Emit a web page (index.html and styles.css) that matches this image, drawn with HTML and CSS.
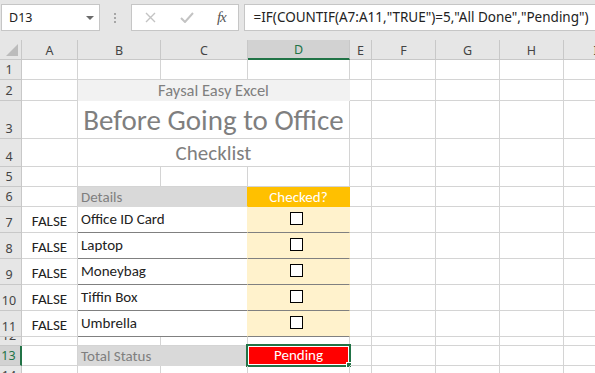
FILE: index.html
```html
<!DOCTYPE html>
<html lang="en">
<head>
  <meta charset="UTF-8" />
  <title>Checklist - Excel</title>
  <link rel="stylesheet" href="styles.css">
</head>
<body>
  <div class="toolbar">
    <div class="namebox">
      <span>D13</span>
      <svg class="drop" width="8" height="4" viewBox="0 0 8 4"><path d="M0 0h8L4 4z" fill="#6a6a6a"/></svg>
    </div>
    <div class="grip"><i></i><i></i><i></i></div>
    <div class="fxbox">
      <svg class="x-icon" width="11" height="11" viewBox="0 0 11 11"><path d="M1 1l9 9M10 1l-9 9" stroke="#c3c3c3" stroke-width="1.4" fill="none"/></svg>
      <svg class="ok-icon" width="14" height="11" viewBox="0 0 14 11"><path d="M1 6l4 4 8-9" stroke="#c3c3c3" stroke-width="2" fill="none"/></svg>
      <span class="fx">fx</span>
    </div>
    <div class="formula">=IF(COUNTIF(A7:A11,"TRUE")=5,"All Done","Pending")</div>
  </div>

  <div class="sheet">
    <div class="row heads">
      <div class="corner"><i></i></div>
      <div class="ch">A</div><div class="ch">B</div><div class="ch">C</div>
      <div class="ch active">D</div><div class="ch">E</div><div class="ch">F</div>
      <div class="ch">G</div><div class="ch">H</div><div class="ch">I</div>
    </div>

    <div class="row">
      <div class="rh">1</div>
      <div class="c"></div><div class="c"></div><div class="c"></div><div class="c"></div>
      <div class="c"></div><div class="c"></div><div class="c"></div><div class="c"></div><div class="c"></div>
    </div>

    <div class="row h21">
      <div class="rh">2</div>
      <div class="c"></div>
      <div class="c span3 band brand">Faysal Easy Excel</div>
      <div class="c"></div><div class="c"></div><div class="c"></div><div class="c"></div><div class="c"></div>
    </div>

    <div class="row h38">
      <div class="rh">3</div>
      <div class="c"></div>
      <div class="c span3 title">Before Going to Office</div>
      <div class="c"></div><div class="c"></div><div class="c"></div><div class="c"></div><div class="c"></div>
    </div>

    <div class="row h28">
      <div class="rh">4</div>
      <div class="c"></div>
      <div class="c span3 subtitle">Checklist</div>
      <div class="c"></div><div class="c"></div><div class="c"></div><div class="c"></div><div class="c"></div>
    </div>

    <div class="row">
      <div class="rh">5</div>
      <div class="c"></div><div class="c"></div><div class="c"></div><div class="c"></div>
      <div class="c"></div><div class="c"></div><div class="c"></div><div class="c"></div><div class="c"></div>
    </div>

    <div class="row">
      <div class="rh">6</div>
      <div class="c"></div>
      <div class="c span2 label-cell gray">Details</div>
      <div class="c checked-head">Checked?</div>
      <div class="c"></div><div class="c"></div><div class="c"></div><div class="c"></div><div class="c"></div>
    </div>

    <div class="row h26">
      <div class="rh">7</div>
      <div class="c bool">FALSE</div>
      <div class="c span2 item">Office ID Card</div>
      <div class="c tick"><span class="box"></span></div>
      <div class="c"></div><div class="c"></div><div class="c"></div><div class="c"></div><div class="c"></div>
    </div>

    <div class="row h26">
      <div class="rh">8</div>
      <div class="c bool">FALSE</div>
      <div class="c span2 item">Laptop</div>
      <div class="c tick"><span class="box"></span></div>
      <div class="c"></div><div class="c"></div><div class="c"></div><div class="c"></div><div class="c"></div>
    </div>

    <div class="row h26">
      <div class="rh">9</div>
      <div class="c bool">FALSE</div>
      <div class="c span2 item">Moneybag</div>
      <div class="c tick"><span class="box"></span></div>
      <div class="c"></div><div class="c"></div><div class="c"></div><div class="c"></div><div class="c"></div>
    </div>

    <div class="row h26">
      <div class="rh">10</div>
      <div class="c bool">FALSE</div>
      <div class="c span2 item">Tiffin Box</div>
      <div class="c tick"><span class="box"></span></div>
      <div class="c"></div><div class="c"></div><div class="c"></div><div class="c"></div><div class="c"></div>
    </div>

    <div class="row h26">
      <div class="rh">11</div>
      <div class="c bool">FALSE</div>
      <div class="c span2 item">Umbrella</div>
      <div class="c tick"><span class="box"></span></div>
      <div class="c"></div><div class="c"></div><div class="c"></div><div class="c"></div><div class="c"></div>
    </div>

    <div class="row h9">
      <div class="rh">12</div>
      <div class="c"></div><div class="c"></div><div class="c"></div><div class="c"></div>
      <div class="c"></div><div class="c"></div><div class="c"></div><div class="c"></div><div class="c"></div>
    </div>

    <div class="row">
      <div class="rh active">13</div>
      <div class="c"></div>
      <div class="c span2 label-cell total">Total Status</div>
      <div class="c status">Pending<span class="selection"><i class="handle"></i></span></div>
      <div class="c"></div><div class="c"></div><div class="c"></div><div class="c"></div><div class="c"></div>
    </div>

    <div class="row">
      <div class="rh">14</div>
      <div class="c"></div><div class="c"></div><div class="c"></div><div class="c"></div>
      <div class="c"></div><div class="c"></div><div class="c"></div><div class="c"></div><div class="c"></div>
    </div>
  </div>
</body>
</html>
```

FILE: styles.css
```css
* {
  margin: 0;
  padding: 0;
  box-sizing: border-box;
}
body {
  width: 595px;
  height: 373px;
  overflow: hidden;
  background: #fff;
  font-family: "Noto Sans", "Open Sans", sans-serif;
  color: #222;
}

/* formula bar */
.toolbar {
  height: 40px;
  background: #e6e6e6;
  display: flex;
  align-items: flex-start;
  padding: 4px 0 0 1px;
  white-space: nowrap;
}
.namebox {
  width: 101px;
  height: 27px;
  background: #fff;
  border: 1px solid #c6c6c6;
  display: flex;
  align-items: center;
  justify-content: space-between;
  padding: 0 5px 0 7px;
  font-size: 12.5px;
}
.grip {
  margin: 9px 0 0 14px;
  display: flex;
  flex-direction: column;
  gap: 2px;
}
.grip i {
  width: 2px;
  height: 2px;
  background: #a6a6a6;
}
.fxbox {
  width: 110px;
  height: 27px;
  margin-left: 15px;
  background: #fff;
  border: 1px solid #c6c6c6;
  display: flex;
  align-items: center;
  padding-left: 13px;
}
.ok-icon {
  margin-left: 24px;
}
.fx {
  margin-left: 23px;
  font-family: "Liberation Serif", serif;
  font-style: italic;
  font-size: 15px;
  color: #555;
  letter-spacing: -1px;
}
.formula {
  width: 360px;
  height: 27px;
  margin-left: 5px;
  background: #fff;
  border: 1px solid #c6c6c6;
  border-right: none;
  padding-left: 9px;
  font-size: 13.5px;
  line-height: 25px;
}

/* sheet */
.sheet {
  width: 628px;
}
.row {
  display: grid;
  grid-template-columns: 22px 56px 83px 87px 102px 22px 64px 64px 64px 64px;
  height: 20px;
}
.h9 { height: 9px; }
.h21 { height: 21px; }
.h26 { height: 26px; }
.h28 { height: 28px; }
.h38 { height: 38px; }

.corner,
.ch,
.rh {
  background: #e6e6e6;
  border-right: 1px solid #c8c8c8;
  border-bottom: 1px solid #c8c8c8;
  display: flex;
  color: #444;
  font-size: 12.5px;
  overflow: hidden;
}
.corner {
  align-items: flex-end;
  justify-content: flex-end;
  padding: 0 3px 3px 0;
}
.corner i {
  width: 12px;
  height: 12px;
  background: #bcbcbc;
  clip-path: polygon(100% 0, 100% 100%, 0 100%);
}
.ch {
  align-items: center;
  justify-content: center;
  padding-top: 1px;
}
.ch.active {
  background: #d2d2d2;
  border-bottom: 2px solid #217346;
  color: #217346;
}
.rh {
  align-items: flex-end;
  justify-content: center;
  padding: 0 3px 1px 0;
  line-height: 17px;
}
.rh.active {
  background: #d2d2d2;
  border-right: 2px solid #217346;
  color: #217346;
}

.c {
  position: relative;
  border-right: 1px solid #d4d4d4;
  border-bottom: 1px solid #d4d4d4;
  display: flex;
  align-items: flex-end;
  padding: 0 2px 2px;
  font-family: Carlito, Lato, sans-serif;
  font-size: 15px;
  line-height: 17px;
  white-space: nowrap;
}
.span2 { grid-column: span 2; }
.span3 { grid-column: span 3; }

.band {
  background: #f2f2f2;
  border-color: #f2f2f2;
}
.brand,
.title,
.subtitle {
  justify-content: center;
  align-items: center;
  padding: 0;
  color: #7f7f7f;
}
.brand { font-size: 16.5px; }
.title { font-size: 29px; line-height: 34px; }
.subtitle { font-size: 21px; line-height: 24px; }

.label-cell {
  align-items: center;
  color: #7f7f7f;
  padding: 1px 3px 0;
}
.gray {
  background: #d9d9d9;
  border-color: #d9d9d9;
  border-right-color: #ffc000;
}
.total {
  background: #d9d9d9;
  border-color: #d9d9d9;
}
.checked-head {
  background: #ffc000;
  border-color: #ffc000;
  color: #fff;
  justify-content: center;
  align-items: center;
  padding: 1px 0 0;
}

.bool {
  justify-content: center;
  padding-bottom: 2px;
}
.item {
  align-items: center;
  padding: 0 3px;
  border-bottom-color: #808080;
  border-right-color: #fff2cc;
}
.tick {
  background: #fff2cc;
  border-right-color: #fff2cc;
  border-bottom-color: #808080;
  justify-content: center;
  align-items: center;
  padding: 0 5px 2px 0;
}
.box {
  width: 13px;
  height: 13px;
  border: 1px solid #000;
  background: #fff;
}

.status {
  background: #f00;
  border-color: #f00;
  color: #fff;
  justify-content: center;
  align-items: center;
  padding: 0 0 1px;
}
.selection {
  position: absolute;
  left: -2px;
  top: -2px;
  width: 105px;
  height: 23px;
  border: 2px solid #217346;
  box-shadow: inset 0 0 0 1px #fff;
}
.handle {
  position: absolute;
  right: -3px;
  bottom: -3px;
  width: 6px;
  height: 6px;
  background: #217346;
  border: 1px solid #fff;
}
```
